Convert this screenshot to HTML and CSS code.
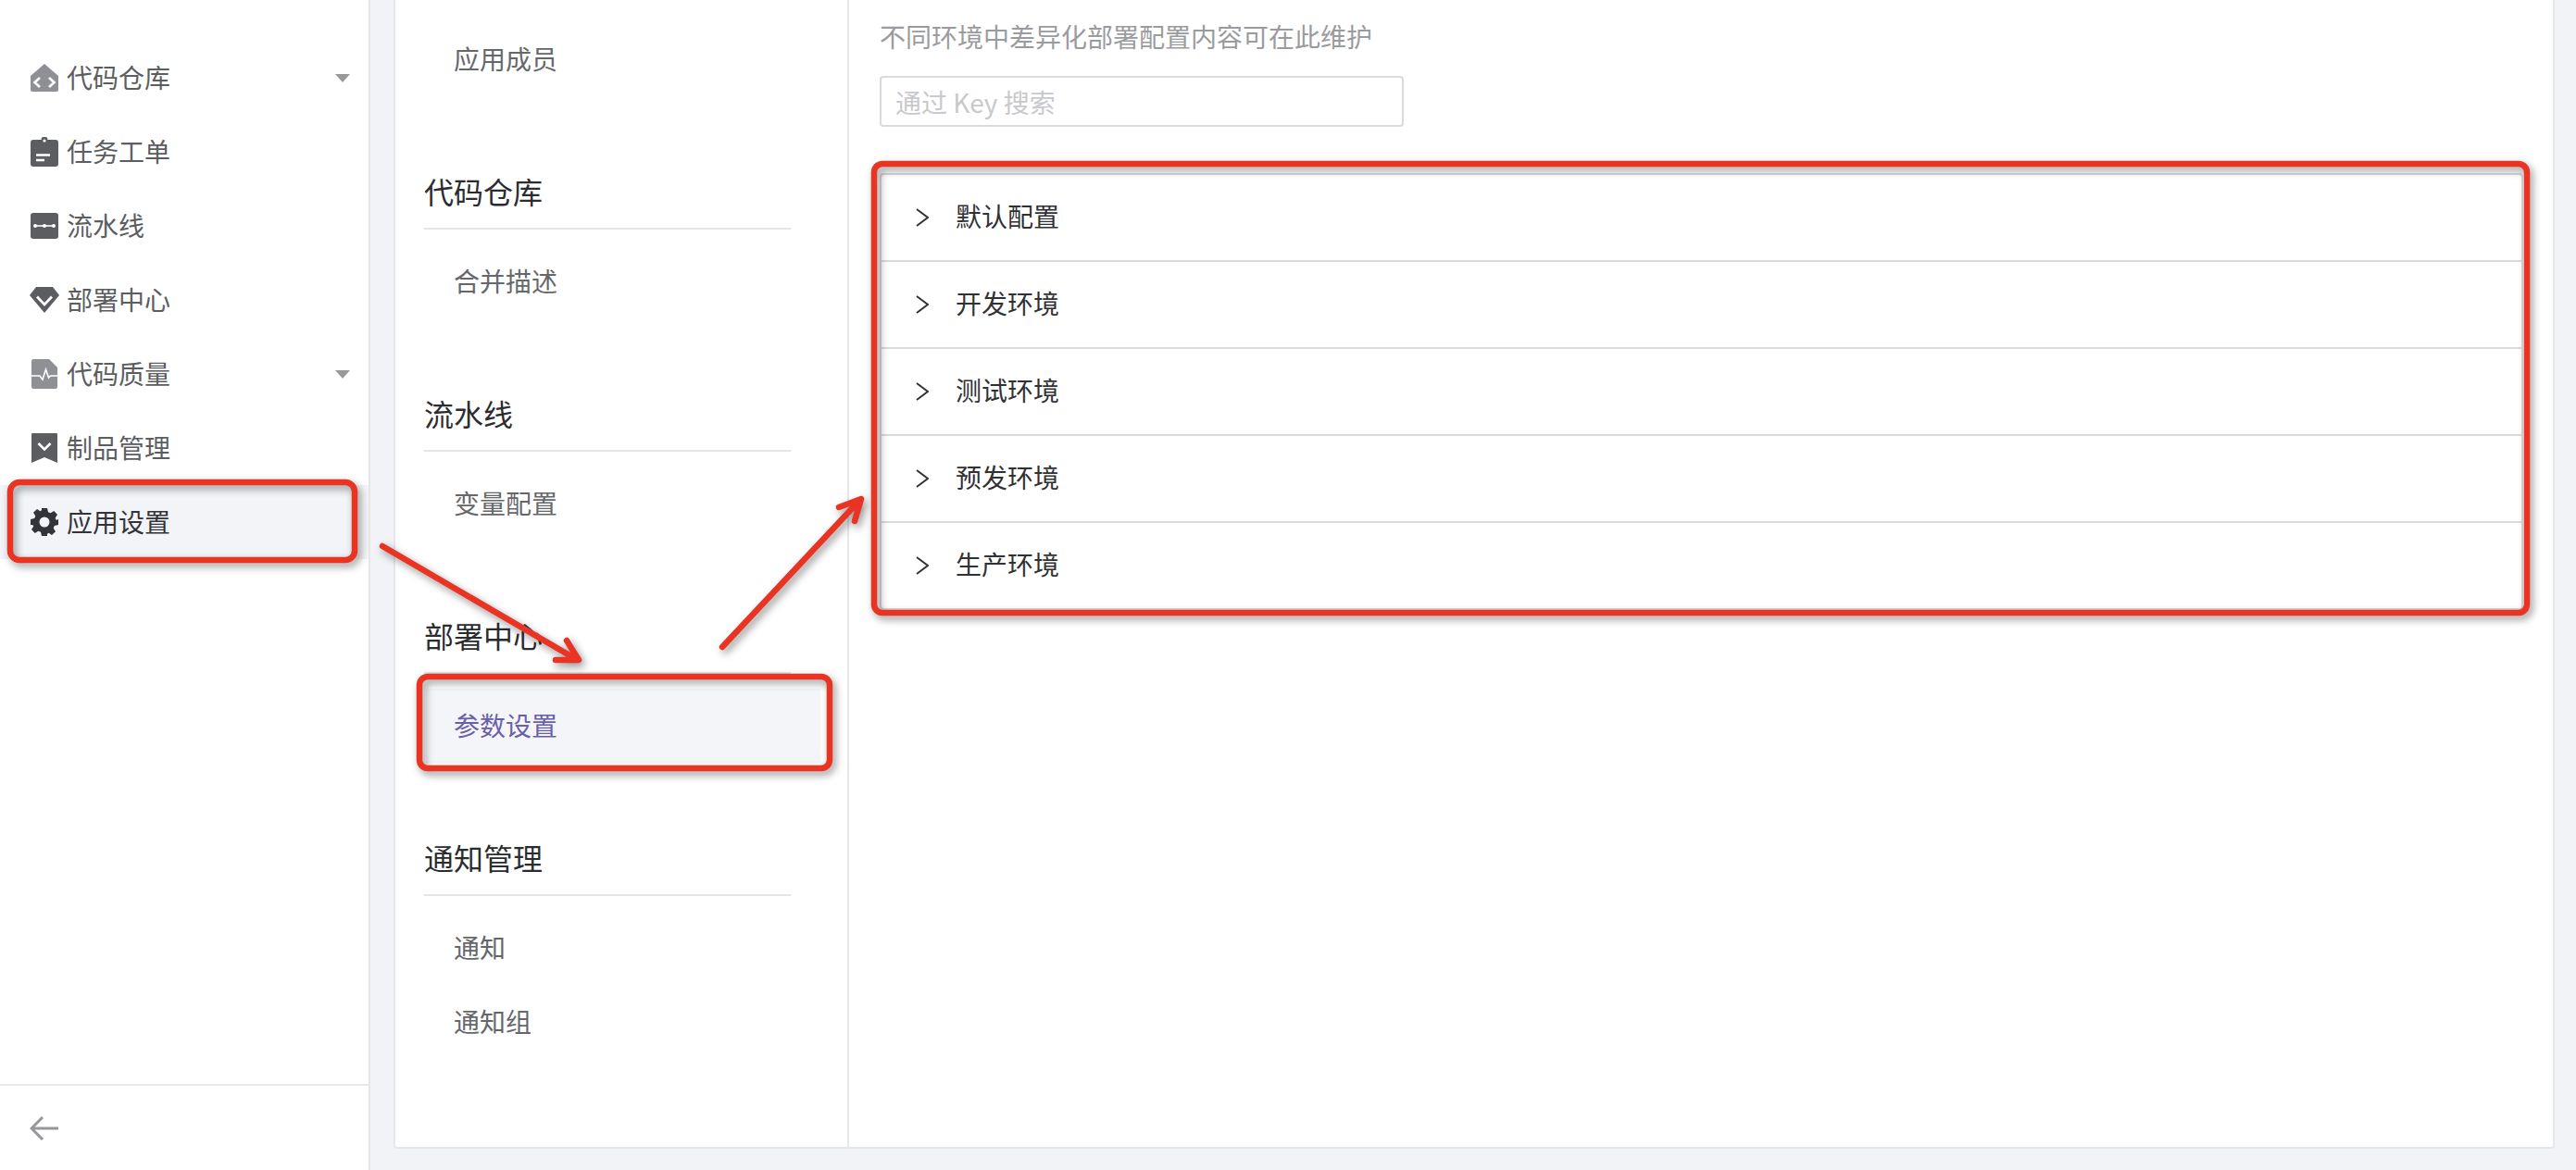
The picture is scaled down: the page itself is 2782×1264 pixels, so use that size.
FILE: index.html
```html
<!DOCTYPE html>
<html lang="zh-CN">
<head>
<meta charset="utf-8">
<title>参数设置</title>
<link rel="stylesheet" href="styles.css">
</head>
<body>
<div class="app">
  <aside class="sidebar">
    <nav class="menu">
      <a class="menu-item"><svg class="icon" viewBox="0 0 30 30"><path class="light" d="M15 0 30 13V28a2 2 0 0 1-2 2H2a2 2 0 0 1-2-2V13Z"/><path class="cut" d="M10 15 4.500 20 10 25M20 15l5.500 5L20 25"/></svg><span class="label">代码仓库</span><i class="caret"></i></a>
      <a class="menu-item"><svg class="icon" viewBox="0 0 30 32"><path class="dark" d="M3 3H11.500a3.500 3.500 0 0 1 7 0H27a3 3 0 0 1 3 3V29a3 3 0 0 1-3 3H3a3 3 0 0 1-3-3V6a3 3 0 0 1 3-3Z"/><circle class="hole" cx="15" cy="4" r="1.600"/><path class="cut" d="M6 19.500H21M6 25H15"/></svg><span class="label">任务工单</span></a>
      <a class="menu-item"><svg class="icon" viewBox="0 0 30 28"><rect class="dark" width="30" height="28" rx="3"/><path class="cut thin" d="M5 14H25"/><circle class="hole" cx="5" cy="14" r="2"/><circle class="hole" cx="15" cy="14" r="2"/><circle class="hole" cx="25" cy="14" r="2"/></svg><span class="label">流水线</span></a>
      <a class="menu-item"><svg class="icon wide" viewBox="0 0 32 28"><path class="dark" d="M7 0H25L32 9 16 28 0 9Z"/><path class="cut" d="M8 10.500 16 19l8-8.500"/></svg><span class="label">部署中心</span></a>
      <a class="menu-item"><svg class="icon narrow" viewBox="0 0 28 32"><path class="light" d="M2 0H19L28 9V30a2 2 0 0 1-2 2H2a2 2 0 0 1-2-2V2a2 2 0 0 1 2-2Z"/><path class="cut thin" d="M0 18H9L12 22 15.500 11 18.500 20 20.500 18H28"/></svg><span class="label">代码质量</span><i class="caret"></i></a>
      <a class="menu-item"><svg class="icon narrow" viewBox="0 0 28 32"><path class="dark" d="M1 0H27a1 1 0 0 1 1 1V32L14 26 0 32V1a1 1 0 0 1 1-1Z"/><path class="cut" d="M7.500 11 14 17.500 20.500 11"/></svg><span class="label">制品管理</span></a>
      <a class="menu-item active"><svg class="icon" viewBox="0 0 30 30"><path class="black" fill-rule="evenodd" d="M12 0H18L19 4.200 21.600 5.300 25.300 3 29 7 26.700 10.400 27.800 13 30 12V18L25.800 19 24.700 21.600 27 25.300 23 29 19.600 26.700 18 27.800 18 30H12L11 25.800 8.400 24.700 4.700 27 1 23 3.300 19.600 2.200 18 0 18V12L4.200 11 5.300 8.400 3 4.700 7 1 10.400 3.300 12 2.200ZM15 9.500a5.500 5.500 0 1 0 0 11 5.500 5.500 0 0 0 0-11Z"/></svg><span class="label">应用设置</span></a>
    </nav>
    <footer class="side-footer">
      <svg class="back" viewBox="0 0 32 26"><path d="M31 13H2M14 1 2 13 14 25"/></svg>
    </footer>
  </aside>

  <main class="main">
    <section class="card">
      <div class="subnav">
        <a class="sub-item first">应用成员</a>

        <div class="group">
          <h3 class="group-title">代码仓库</h3>
          <a class="sub-item">合并描述</a>
        </div>
        <div class="group">
          <h3 class="group-title">流水线</h3>
          <a class="sub-item">变量配置</a>
        </div>
        <div class="group">
          <h3 class="group-title">部署中心</h3>
          <a class="sub-item current">参数设置</a>
        </div>
        <div class="group">
          <h3 class="group-title">通知管理</h3>
          <a class="sub-item">通知</a>
          <a class="sub-item">通知组</a>
        </div>
      </div>

      <div class="content">
        <p class="hint">不同环境中差异化部署配置内容可在此维护</p>
        <input class="search" type="text" placeholder="通过 Key 搜索">
        <div class="collapse">
          <div class="row"><svg class="chev" viewBox="0 0 14 20"><path d="M1 1 13 10 1 19"/></svg><span class="row-text">默认配置</span></div>
          <div class="row"><svg class="chev" viewBox="0 0 14 20"><path d="M1 1 13 10 1 19"/></svg><span class="row-text">开发环境</span></div>
          <div class="row"><svg class="chev" viewBox="0 0 14 20"><path d="M1 1 13 10 1 19"/></svg><span class="row-text">测试环境</span></div>
          <div class="row"><svg class="chev" viewBox="0 0 14 20"><path d="M1 1 13 10 1 19"/></svg><span class="row-text">预发环境</span></div>
          <div class="row"><svg class="chev" viewBox="0 0 14 20"><path d="M1 1 13 10 1 19"/></svg><span class="row-text">生产环境</span></div>
        </div>
      </div>
    </section>
  </main>

  <svg class="marks" viewBox="0 0 2782 1264">
    <rect x="11" y="521" width="372" height="84" rx="10"/>
    <rect x="453" y="731" width="443" height="99" rx="9"/>
    <rect x="944" y="177" width="1785" height="485" rx="9"/>
    <path d="M413 590 622 712M612 692 625 713 600 713"/>
    <path d="M780 699 928 541M906 548 930 539 923 563"/>
  </svg>
</div>
</body>
</html>
```

FILE: styles.css
```css
* { box-sizing: border-box; }

html, body {
  margin: 0;
  height: 100%;
  overflow: hidden;
}

body {
  font-family: "Noto Sans CJK SC", "Noto Sans", sans-serif;
  font-size: 28px;
  background: #f2f3f7;
}

.app {
  position: relative;
  display: flex;
  width: 2782px;
  height: 1264px;
}

/* sidebar */
.sidebar {
  display: flex;
  flex-direction: column;
  flex: none;
  width: 400px;
  background: #fff;
  border-right: 2px solid #e6e7eb;
}

.menu {
  flex: 1;
  padding-top: 44px;
}

.menu-item {
  display: flex;
  align-items: center;
  height: 80px;
  padding: 0 20px 0 33px;
  color: #5c5d61;
}

.menu-item.active {
  background: #f3f4f7;
  color: #33343a;
}

.icon {
  flex: none;
  width: 30px;
  height: 32px;
  margin-right: 9px;
}

.icon.wide { width: 32px; margin-left: -1px; margin-right: 8px; }
.icon.narrow { width: 28px; margin-left: 1px; margin-right: 10px; }

.light { fill: #8f9093; }
.dark { fill: #5c5d61; }
.black { fill: #33343a; }
.hole { fill: #fff; }
.cut {
  fill: none;
  stroke: #fff;
  stroke-width: 2.600;
}
.cut.thin { stroke-width: 1.600; }

.label {
  flex: 1;
  line-height: 40px;
  margin-top: -3px;
}

.caret {
  width: 0;
  height: 0;
  border-left: 8px solid transparent;
  border-right: 8px solid transparent;
  border-top: 9px solid #98999c;
}

.side-footer {
  display: flex;
  align-items: center;
  height: 93px;
  padding-left: 32px;
  border-top: 2px solid #e8e9ec;
}

.back {
  width: 32px;
  height: 26px;
  fill: none;
  stroke: #96979a;
  stroke-width: 3;
}

/* main */
.main {
  flex: 1;
  padding: 0 23px 23px 25px;
}

.card {
  display: flex;
  height: 100%;
  background: #fff;
  border: 2px solid #e6e7eb;
  border-top: 0;
  border-radius: 0 0 4px 4px;
}

.subnav {
  flex: none;
  width: 490px;
  padding: 24px 61px 0 31px;
  border-right: 2px solid #e6e7eb;
}

.sub-item {
  display: flex;
  align-items: center;
  height: 80px;
  padding-left: 32px;
  padding-bottom: 2px;
  color: #66676b;
}

.sub-item.current {
  flex: none;
  width: 426px;
  margin-left: 2px;
  padding-left: 30px;
  background: #f4f5f9;
  color: #6a5fa9;
}

.group { margin-top: 64px; }

.group-title {
  height: 80px;
  margin: 0 0 16px;
  padding-top: 16px;
  font-size: 32px;
  font-weight: 400;
  line-height: 44px;
  color: #2b2c30;
  border-bottom: 2px solid #e3e4e8;
}

.content {
  flex: 1;
  padding: 0 32px 0 33px;
}

.hint {
  margin: 19px 0 0;
  line-height: 40px;
  color: #9a9b9e;
}

.search {
  display: block;
  width: 566px;
  height: 55px;
  margin-top: 23px;
  padding: 0 15px;
  border: 2px solid #d9dadc;
  border-radius: 4px;
  font: inherit;
  background: #fff;
  outline: 0;
}

.search::placeholder { color: #c8c9cc; opacity: 1; }

.collapse {
  margin-top: 50px;
  width: 1775px;
  border: 2px solid #d9dadc;
  border-radius: 4px;
}

.row {
  display: flex;
  align-items: center;
  height: 94px;
  padding-left: 38px;
  color: #303135;
  border-bottom: 2px solid #d9dadc;
}

.row:last-child { border-bottom: 0; height: 92px; }

.row-text { margin-top: -4px; }

.chev {
  flex: none;
  width: 14px;
  height: 20px;
  margin-left: -1px;
  margin-right: 29px;
  fill: none;
  stroke: #303135;
  stroke-width: 2;
}

/* annotations drawn on top of the screenshot */
.marks {
  position: absolute;
  inset: 0;
  width: 100%;
  height: 100%;
  fill: none;
  stroke: #ea3423;
  stroke-width: 6.500;
  stroke-linecap: round;
  stroke-linejoin: round;
  filter: drop-shadow(3px 4px 4px rgba(0, 0, 0, .42));
  pointer-events: none;
}
```
